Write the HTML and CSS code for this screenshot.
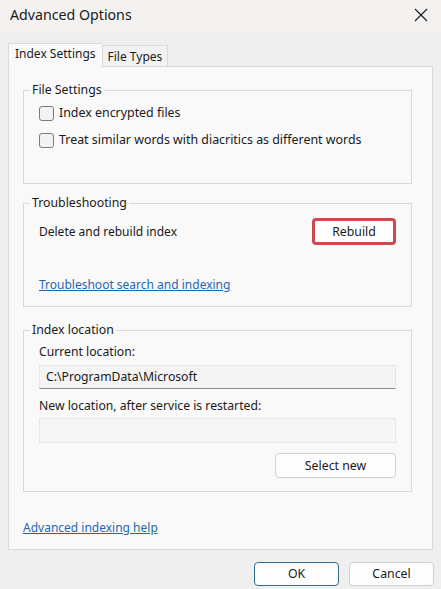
FILE: index.html
```html
<!DOCTYPE html>
<html lang="en">
<head>
<meta charset="utf-8">
<title>Advanced Options</title>
<link rel="stylesheet" href="styles.css">
</head>
<body>
<div class="dialog">
  <div class="titlebar">
    <span class="title">Advanced Options</span>
    <svg class="close" width="14" height="14" viewBox="0 0 14 14"><path d="M1 1 L13 13 M13 1 L1 13" stroke="#1b1b1b" stroke-width="1.1" fill="none"/></svg>
  </div>
  <div class="content">
    <div class="tabs">
      <div class="tab active">Index Settings</div>
      <div class="tab">File Types</div>
    </div>
    <div class="panel">
      <fieldset class="group g-file">
        <legend>File Settings</legend>
        <label class="check"><span class="box"></span>Index encrypted files</label>
        <label class="check second"><span class="box"></span>Treat similar words with diacritics as different words</label>
      </fieldset>
      <fieldset class="group g-trouble">
        <legend>Troubleshooting</legend>
        <div class="row">
          <span>Delete and rebuild index</span>
          <button class="btn rebuild">Rebuild</button>
        </div>
        <a class="link trouble-link" href="#">Troubleshoot search and indexing</a>
      </fieldset>
      <fieldset class="group g-loc">
        <legend>Index location</legend>
        <div class="lbl">Current location:</div>
        <div class="field current">C:\ProgramData\Microsoft</div>
        <div class="lbl lbl2">New location, after service is restarted:</div>
        <div class="field empty"></div>
        <div class="right"><button class="btn select">Select new</button></div>
      </fieldset>
      <a class="link help-link" href="#">Advanced indexing help</a>
    </div>
    <div class="actions">
      <button class="btn ok">OK</button>
      <button class="btn cancel">Cancel</button>
    </div>
  </div>
</div>
</body>
</html>
```
FILE: styles.css
```css
html, body {
  margin: 0;
  padding: 0;
}
body {
  width: 441px;
  height: 589px;
  background: #efefef;
  font-family: "Noto Sans", "Open Sans", sans-serif;
  font-size: 12px;
  color: #1a1a1a;
  overflow: hidden;
}
.dialog {
  width: 441px;
  height: 589px;
  display: flex;
  flex-direction: column;
}
.titlebar {
  height: 32px;
  background: #f3f2f0;
  display: flex;
  align-items: center;
  justify-content: space-between;
  padding: 0 13px 0 10px;
  flex: none;
}
.title {
  font-size: 14.2px;
  line-height: 20px;
  margin-top: -2px;
}
.close {
  display: block;
  margin-top: -2px;
}
.content {
  padding: 0 7px 0 8px;
  display: flex;
  flex-direction: column;
}
.tabs {
  display: flex;
  margin-top: 11px;
  align-items: flex-end;
  height: 23px;
  position: relative;
  z-index: 1;
}
.tab {
  border: 1px solid #dadada;
  border-bottom: none;
  background: #f2f2f2;
  padding: 0 5px;
  height: 20px;
  line-height: 21px;
  font-size: 12px;
}
.tab.active {
  background: #f9f9f9;
  height: 23px;
  line-height: 20px;
  padding: 0 6px 0 6px;
  margin-bottom: -1px;
  border-right: none;
}
.panel {
  border: 1px solid #dadada;
  background: #f9f9f9;
  height: 482px;
  margin-right: 1px;
  display: flex;
  flex-direction: column;
  padding: 0 20px 0 14px;
}
.group {
  border: 1px solid #d9d9d9;
  margin: 0;
  padding: 0 15px 0 15px;
  min-width: 0;
}
.group legend {
  padding: 0 2px;
  margin-left: -9px;
  line-height: 16px;
  font-size: 12.3px;
}
.g-file {
  margin-top: 15px;
  padding-top: 7px;
  padding-bottom: 35px;
}
.check {
  display: flex;
  align-items: center;
  height: 16px;
  line-height: 16px;
  font-size: 12.4px;
}
.check.second {
  margin-top: 11px;
}
.box {
  width: 13px;
  height: 13px;
  border: 1px solid #7b7b7b;
  border-radius: 3px;
  background: #f3f3f3;
  margin-right: 5px;
  flex: none;
}
.g-trouble {
  margin-top: 11px;
  padding-top: 7px;
  padding-bottom: 13px;
}
.row {
  display: flex;
  align-items: center;
  justify-content: space-between;
  font-size: 12px;
}
.btn {
  font-family: inherit;
  font-size: 12.3px;
  color: #1a1a1a;
  background: #fdfdfd;
  border: 1px solid #d0d0d0;
  border-radius: 4px;
  padding: 0;
  margin: 0;
  line-height: 16px;
}
.rebuild {
  width: 84px;
  height: 27px;
  border: 3px solid #cf474f;
  border-radius: 4px;
  background: #ffffff;
  margin-right: 0;
}
.link {
  color: #1f66b1;
  text-decoration: underline;
  line-height: 16px;
  font-size: 12px;
  display: block;
  width: max-content;
}
.trouble-link {
  margin-top: 32px;
}
.g-loc {
  margin-top: 15px;
  padding-top: 6px;
  padding-bottom: 13px;
}
.lbl {
  line-height: 16px;
  font-size: 12.2px;
}
.lbl2 {
  margin-top: 9px;
}
.field {
  box-sizing: border-box;
  height: 24px;
  background: #f4f4f4;
  border: 1px solid #e6e6e6;
  margin-top: 5px;
  padding-left: 6px;
  line-height: 22px;
  font-size: 12.2px;
}
.field.current {
  border-bottom: 1px solid #8a8a8a;
}
.field.empty {
  height: 25px;
  margin-top: 4px;
  background: #f6f6f6;
}
.right {
  display: flex;
  justify-content: flex-end;
  margin-top: 10px;
}
.select {
  width: 121px;
  height: 25px;
}
.help-link {
  margin-top: 28px;
  margin-left: 0;
}
.actions {
  display: flex;
  justify-content: flex-end;
  gap: 10px;
  margin-top: 12px;
}
.ok, .cancel {
  width: 85px;
  height: 24px;
}
.ok {
  border-color: #2f6f8e;
}
```
